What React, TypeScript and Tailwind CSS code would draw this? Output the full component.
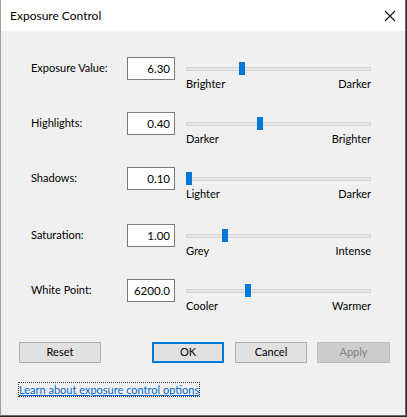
import React from "react";

type Row = {
  label: string;
  value: string;
  pos: number; // thumb offset from track start, px
  low: string;
  high: string;
};

const rows: Row[] = [
  { label: "Exposure Value:", value: "6.30", pos: 53, low: "Brighter", high: "Darker" },
  { label: "Highlights:", value: "0.40", pos: 71, low: "Darker", high: "Brighter" },
  { label: "Shadows:", value: "0.10", pos: 0, low: "Lighter", high: "Darker" },
  { label: "Saturation:", value: "1.00", pos: 36, low: "Grey", high: "Intense" },
  { label: "White Point:", value: "6200.0", pos: 59, low: "Cooler", high: "Warmer" },
];

const rowGaps = ["mt-0", "mt-[20px]", "mt-[20px]", "mt-[22px]", "mt-[20px]"];

function SliderRow({ row, gap }: { row: Row; gap: string }) {
  return (
    <div className={`flex items-start ${gap}`}>
      <div className="w-[96px] h-[23px] flex items-center text-[11px] text-black">{row.label}</div>
      <div className="w-[48px] h-[23px] border border-[#7a7a7a] bg-white flex items-center justify-end pr-[4px] text-[11.5px] text-black">
        {row.value}
      </div>
      <div className="ml-[11px] w-[185px] pt-[5px]">
        <div className="relative h-[13px]">
          <div className="absolute left-0 right-0 top-[5px] h-[4px] bg-[#e7e7e7] border border-[#d6d6d6]" />
          <div
            className="absolute top-0 w-[6px] h-[13px] bg-[#0078d7]"
            style={{ left: row.pos }}
          />
        </div>
        <div className="mt-[1px] flex justify-between text-[11px] leading-[16px] text-black">
          <span>{row.low}</span>
          <span>{row.high}</span>
        </div>
      </div>
    </div>
  );
}

function Button({
  children,
  width,
  variant = "normal",
}: {
  children: React.ReactNode;
  width: string;
  variant?: "normal" | "default" | "disabled";
}) {
  const styles = {
    normal: "bg-[#e1e1e1] border border-[#adadad] text-black",
    default: "bg-[#e1e1e1] border-2 border-[#0078d7] text-black",
    disabled: "bg-[#cccccc] border border-[#bfbfbf] text-[#838383]",
  }[variant];
  return (
    <div className={`${width} h-[21px] flex items-center justify-center text-[11px] ${styles}`}>
      {children}
    </div>
  );
}

export default function App() {
  return (
    <div
      className="w-[407px] h-[417px] bg-[#2b2b2b]"
      style={{ fontFamily: 'Lato, "Noto Sans", sans-serif' }}
    >
      <div className="w-[406px] h-[416px] flex flex-col border-l border-[#a0a0a0] border-r border-b border-r-[#6a6a6a] border-b-[#6a6a6a] bg-[#f0f0f0]">
        {/* title bar */}
        <div className="h-[31px] shrink-0 bg-white flex items-center justify-between pl-[9px] pr-[9px]">
          <span className="text-[12px] text-black">Exposure Control</span>
          <svg width="12" height="12" viewBox="0 0 12 12">
            <path d="M1 1 L11 11 M11 1 L1 11" stroke="#111" strokeWidth="1.1" fill="none" />
          </svg>
        </div>

        <div className="pl-[30px] pt-[26px]">
          {rows.map((r, i) => (
            <SliderRow key={r.label} row={r} gap={rowGaps[i]} />
          ))}
        </div>

        <div className="mt-[28px] pl-[18px] flex">
          <Button width="w-[82px]">Reset</Button>
          <div className="ml-[51px]">
            <Button width="w-[72px]" variant="default">OK</Button>
          </div>
          <div className="ml-[11px]">
            <Button width="w-[72px]">Cancel</Button>
          </div>
          <div className="ml-[10px]">
            <Button width="w-[73px]" variant="disabled">Apply</Button>
          </div>
        </div>

        <div className="mt-[19px] pl-[17px] flex">
          <span className="border border-dotted border-[#333] text-[11px] leading-[13px] text-[#0066cc] underline">
            Learn about exposure control options
          </span>
        </div>
      </div>
    </div>
  );
}
